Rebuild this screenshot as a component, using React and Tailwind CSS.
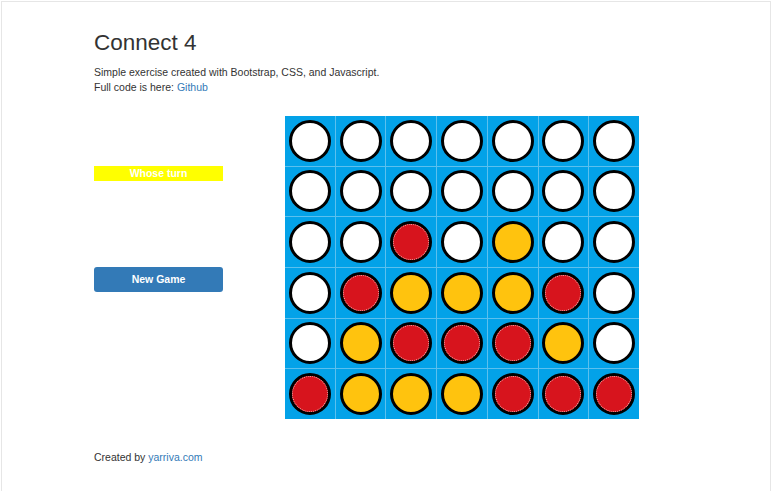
import React from "react";

const BOARD = [
  "WWWWWWW",
  "WWWWWWW",
  "WWRWYWW",
  "WRYYYRW",
  "WYRRRYW",
  "RYYYRRR",
];

function Piece({ c }) {
  if (c === "R") {
    return (
      <div className="w-[42px] h-[42px] rounded-full border-[3px] border-black bg-[#d7141d] flex items-center justify-center">
        <div className="w-[36px] h-[36px] rounded-full border border-dotted border-[#f0a8a8]" />
      </div>
    );
  }
  if (c === "Y") {
    return <div className="w-[42px] h-[42px] rounded-full border-[3px] border-black bg-[#ffc30e]" />;
  }
  return <div className="w-[42px] h-[42px] rounded-full border-[3px] border-black bg-white" />;
}

export default function App() {
  return (
    <div
      className="w-[773px] h-[491px] bg-white overflow-hidden text-[#333]"
      style={{ fontFamily: '"Liberation Sans", Arial, sans-serif' }}
    >
      <div className="ml-[1px] mt-[1px] w-[770px] h-[500px] border-l border-t border-r border-[#e6e6e6] pl-[92px] pt-[26px]">
        <h1 className="text-[22.5px] leading-[30px] font-normal text-[#333]">Connect 4</h1>
        <div className="mt-[7px] text-[10.5px] leading-[15px]">
          <p>Simple exercise created with Bootstrap, CSS, and Javascript.</p>
          <p>
            Full code is here: <span className="text-[#337ab7]">Github</span>
          </p>
        </div>
        <div className="flex mt-[21px]">
          <div className="w-[129px] flex flex-col">
            <div className="mt-[50px] h-[15px] bg-[#ffff00] text-white text-[10.5px] font-bold leading-[15px] text-center">
              Whose turn
            </div>
            <div className="mt-[86px] h-[25px] bg-[#337ab7] rounded-[3px] text-white text-[10.5px] font-bold leading-[25px] text-center">
              New Game
            </div>
          </div>
          <div className="ml-[62px] w-[354px] h-[303px] bg-[#5cc0ee] grid grid-cols-7 grid-rows-6 gap-px">
            {BOARD.map((row, r) =>
              row.split("").map((c, i) => (
                <div key={`${r}-${i}`} className="bg-[#03a2e8] flex items-center justify-center">
                  <Piece c={c} />
                </div>
              ))
            )}
          </div>
        </div>
        <div className="mt-[31px] text-[10.5px] leading-[15px]">
          Created by <span className="text-[#337ab7]">yarriva.com</span>
        </div>
      </div>
    </div>
  );
}
